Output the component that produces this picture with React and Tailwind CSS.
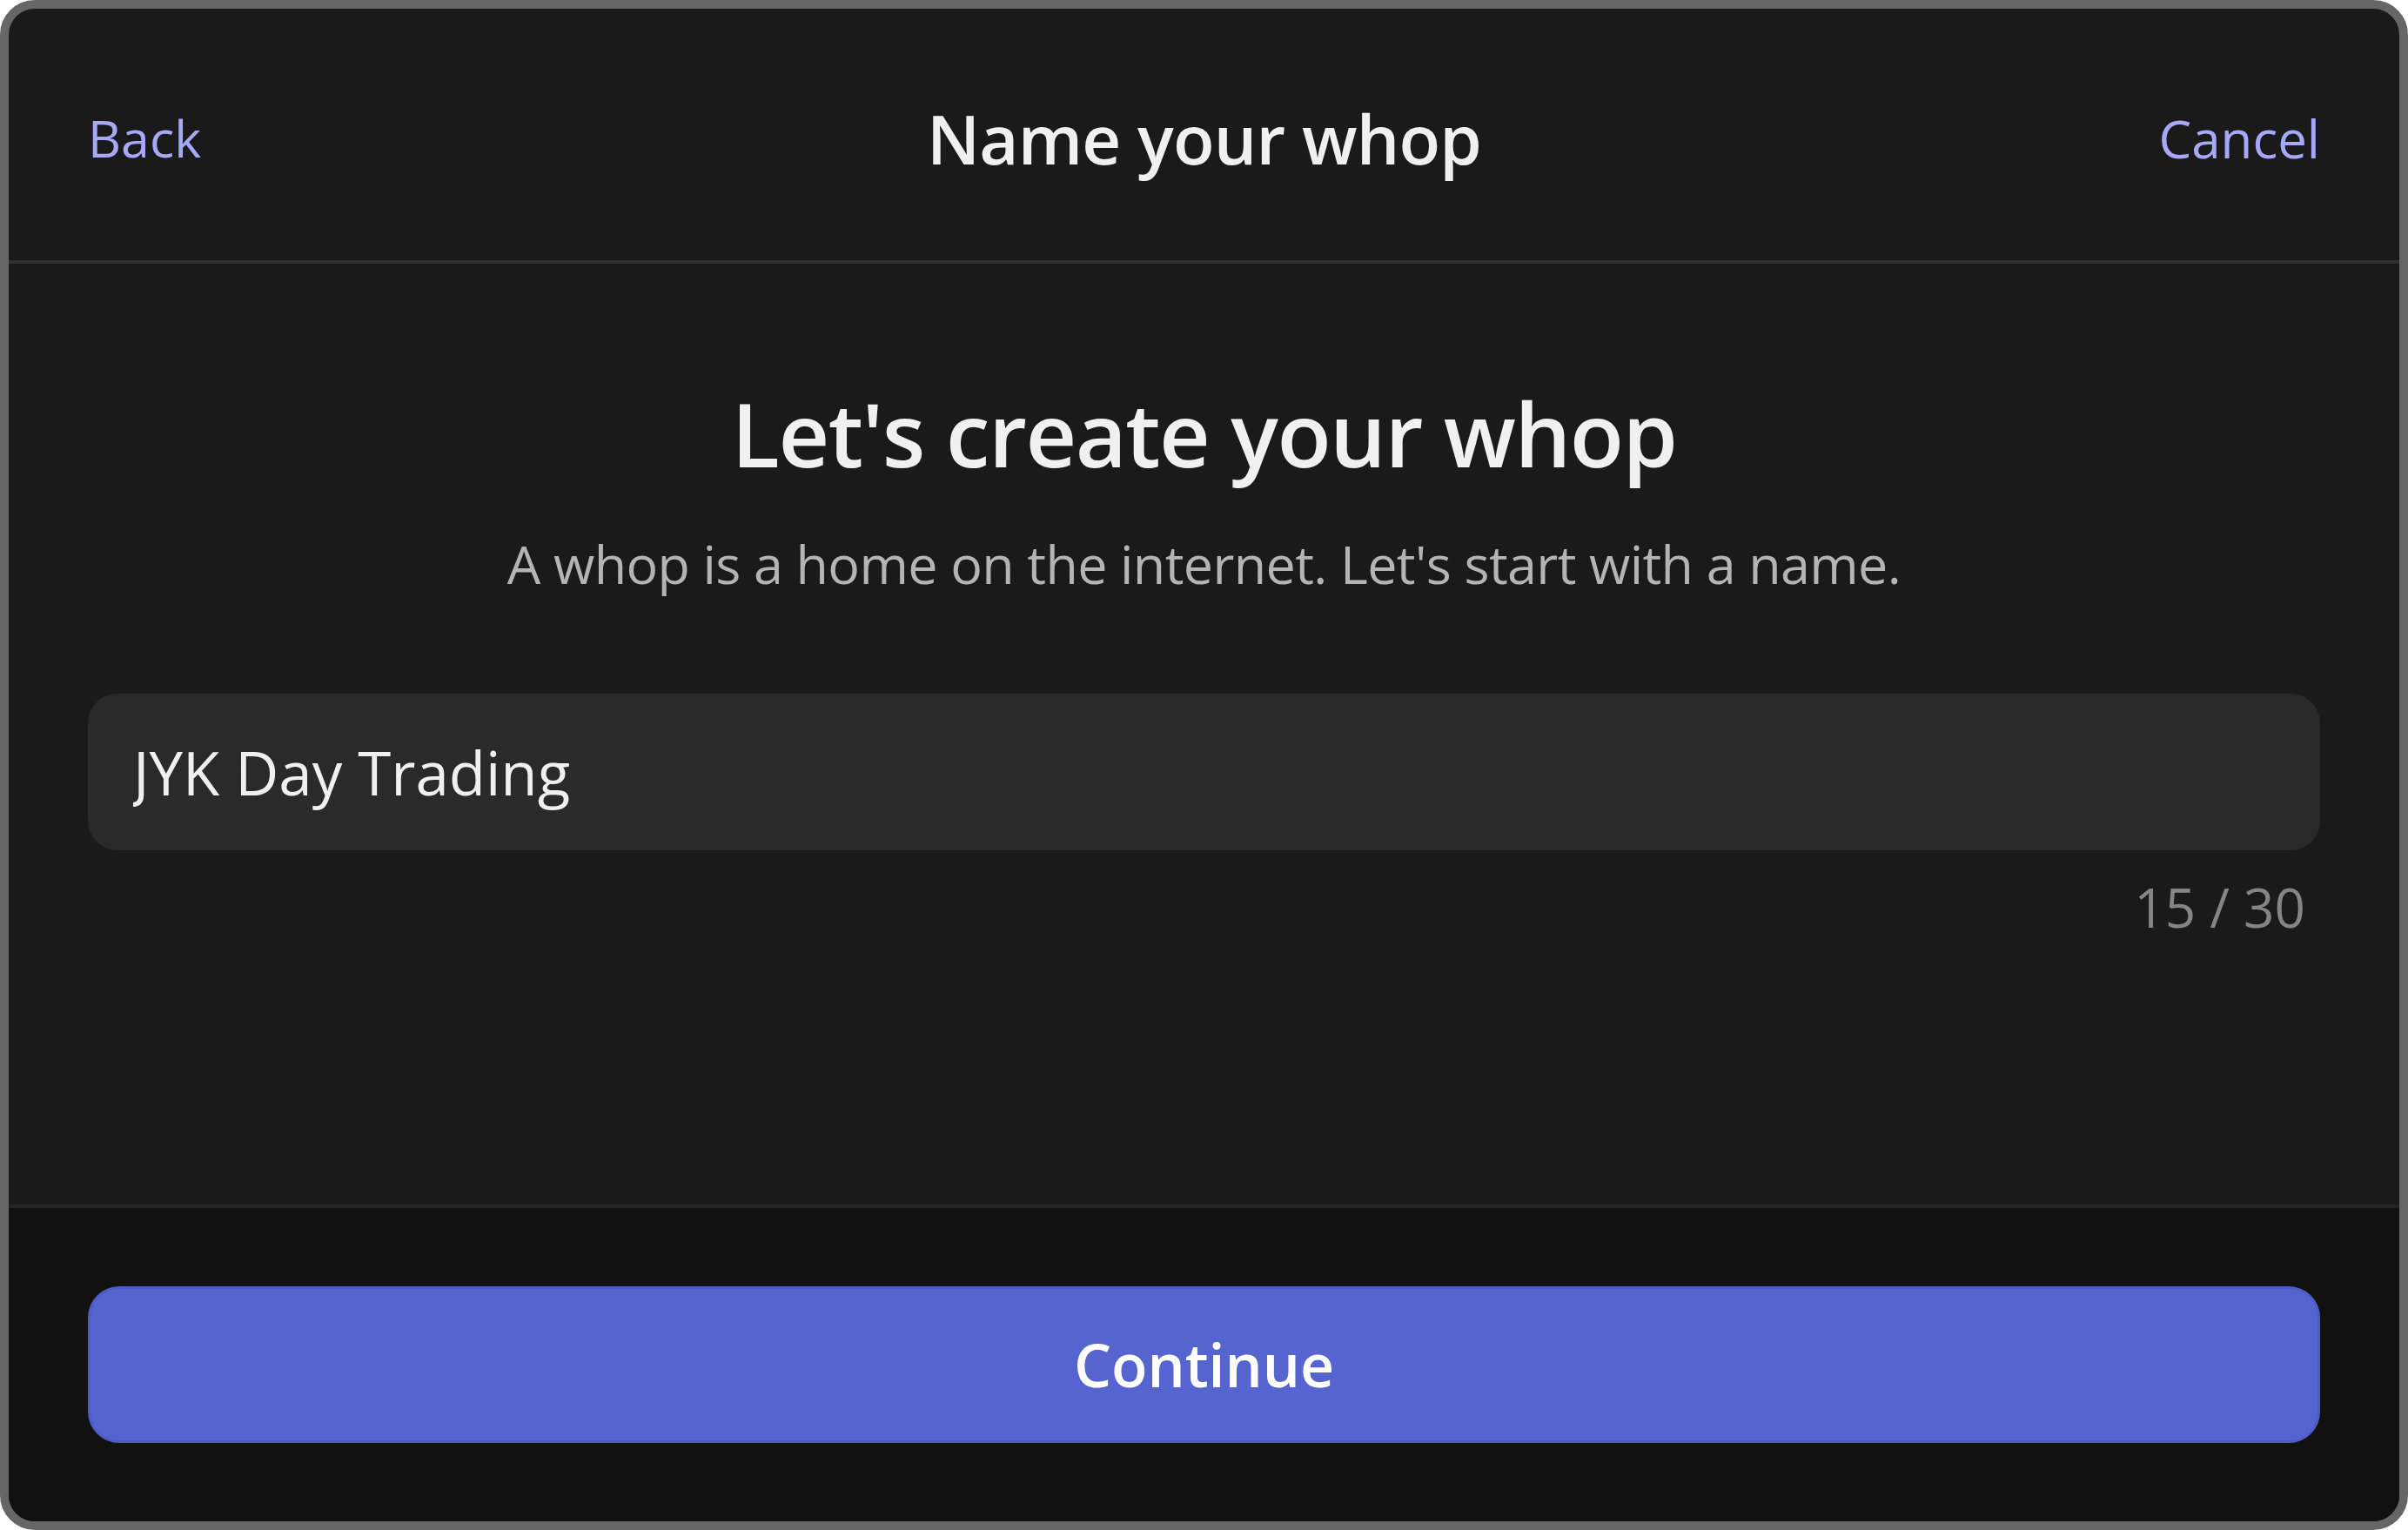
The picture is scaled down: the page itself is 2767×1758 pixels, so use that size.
export default function App() {
  const font = { fontFamily: '"Open Sans", "Noto Sans", sans-serif' };
  const name = "JYK Day Trading";

  return (
    <div className="w-[2767px] h-[1758px] bg-white" style={font}>
      <div className="flex flex-col h-full rounded-[40px] border-[10px] border-[#666666] overflow-hidden bg-[#1a1a1a]">
        {/* header */}
        <header className="h-[293px] shrink-0 grid grid-cols-[1fr_auto_1fr] items-center px-[91px] pt-[8px] border-b-4 border-[#303030]">
          <div>
            <button className="text-[59px] leading-none text-[#a7a9f7]">Back</button>
          </div>
          <h1 className="text-[78px] leading-none font-semibold text-[#f0f0f0] tracking-[-0.01em]">Name your whop</h1>
          <div className="flex justify-end">
            <button className="text-[60px] leading-none text-[#a7a9f7]">Cancel</button>
          </div>
        </header>

        {/* body */}
        <main className="flex-1 flex flex-col px-[91px] pt-[144px] border-b-4 border-[#242424]">
          <h2 className="text-center text-[102px] leading-none font-semibold text-[#f0f0f0] tracking-[-0.015em]">
            Let's create your whop
          </h2>
          <p className="mt-[68px] text-center text-[61px] leading-none text-[#b4b4b4] tracking-[-0.01em]">
            A whop is a home on the internet. Let's start with a name.
          </p>
          <div className="mt-[119px] h-[180px] rounded-[34px] bg-[#2a2a2a] flex items-center pl-[52px] pr-[40px]">
            <input
              defaultValue={name}
              className="w-full bg-transparent outline-none text-[69px] leading-none text-[#f0f0f0]"
              style={font}
            />
          </div>
          <div className="mt-[34px] pr-[17px] text-right text-[62px] leading-none text-[#858585]">
            {name.length} / 30
          </div>
        </main>

        {/* footer */}
        <footer className="h-[360px] shrink-0 bg-[#111111] px-[91px] py-[90px]">
          <button className="w-full h-[180px] rounded-[36px] bg-[#5664d0] border-[3px] border-[#4f5cc4] text-white text-[68px] leading-none font-semibold">
            Continue
          </button>
        </footer>
      </div>
    </div>
  );
}
